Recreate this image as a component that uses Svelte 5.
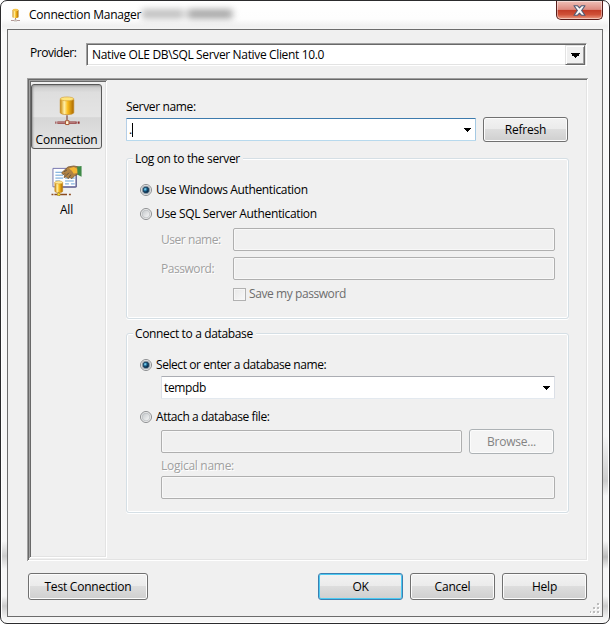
<script lang="ts">
  let provider = $state('Native OLE DB\\SQL Server Native Client 10.0');
  let server = $state('.');
  let auth = $state<'windows' | 'sql'>('windows');
  let source = $state<'name' | 'file'>('name');
  let database = $state('tempdb');
  let page = $state('connection');
</script>

{#snippet radio(checked: boolean, label: string, pick: () => void)}
  <button type="button" class="option" role="radio" aria-checked={checked} onclick={pick}>
    <svg width="12" height="12" viewBox="0 0 12 12">
      <circle cx="6" cy="6" r="5.5" fill="#f6f6f6" stroke="#8b8d8f" stroke-width="1" />
      <circle cx="6" cy="6" r="3.9" fill="url(#well)" stroke={checked ? '#7f8b94' : '#b9bcbf'} stroke-width=".8" />
      {#if checked}
        <circle cx="6" cy="6" r="2.900" fill="url(#ball)" stroke="#143a59" stroke-width=".8" />
      {/if}
    </svg>
    <span>{label}</span>
  </button>
{/snippet}

{#snippet arrow()}
  <svg class="arrow" width="7" height="4" viewBox="0 0 7 4" shape-rendering="crispEdges">
    <path d="M0 0h7v1H6v1H5v1H4v1H3V3H2V2H1V1H0z" />
  </svg>
{/snippet}

<svg class="defs" width="0" height="0" aria-hidden="true">
  <defs>
    <linearGradient id="gold">
      <stop offset="0" stop-color="#c98506" />
      <stop offset=".3" stop-color="#fff0a8" />
      <stop offset=".55" stop-color="#fbbd1d" />
      <stop offset="1" stop-color="#a96700" />
    </linearGradient>
    <linearGradient id="well" x2="1" y2="1">
      <stop offset="0" stop-color="#c3c7ca" />
      <stop offset="1" stop-color="#fafafa" />
    </linearGradient>
    <radialGradient id="ball" cx=".35" cy=".35">
      <stop offset="0" stop-color="#b8ecfb" />
      <stop offset=".4" stop-color="#3190bd" />
      <stop offset="1" stop-color="#0c3150" />
    </radialGradient>
  </defs>
</svg>

<div class="window">
  <header class="titlebar">
    <svg class="app-icon" width="16" height="16" viewBox="0 0 16 16">
      <path d="M4.500 3v7c0 1.500 6 1.500 6 0V3z" fill="url(#gold)" />
      <ellipse cx="7.500" cy="3" rx="3" ry="1.200" fill="#f6c64e" />
      <path d="M7 11h1v2H7z" fill="#a88" />
      <path d="M3 13h9v1H3z" fill="#b39a98" />
      <path d="M6 12.500h3v2H6z" fill="#c9c0b8" />
    </svg>
    <h1>Connection Manager</h1>
    <span class="ghost" aria-hidden="true"></span>
    <button type="button" class="close" aria-label="Close">
      <svg width="13" height="11" viewBox="0 0 13 11">
        <path d="M1 .8h3.600l1.900 2 1.900-2H12L8.600 5.500l3.400 4.700H8.400l-1.900-2.100-1.900 2.100H1l3.400-4.700z" fill="#f7f7f7" stroke="#4e5872" stroke-width="1.100" stroke-linejoin="round" />
      </svg>
    </button>
  </header>

  <main class="client">
    <div class="provider">
      <span class="provider-label">Provider:</span>
      <div class="classic">
        <span class="value">{provider}</span>
        <button type="button" class="drop" aria-label="Open">{@render arrow()}</button>
      </div>
    </div>

    <div class="panel">
      <nav class="sidebar">
        <button type="button" class="tab" class:active={page === 'connection'} onclick={() => (page = 'connection')}>
          <svg width="32" height="32" viewBox="0 0 32 32">
            <path d="M9 4.500v13.500c0 3 14 3 14 0v-13.500z" fill="url(#gold)" stroke="#c58a20" stroke-width=".7" />
            <ellipse cx="16" cy="4" rx="7" ry="2" fill="#ffe57c" stroke="#d6a238" stroke-width=".7" />
            <path d="M16 21v5" stroke="#a38278" stroke-width="2" />
            <path d="M4 28.500h1m1 0h20m1 0h2" stroke="#8c2d2d" stroke-width="2.400" />
            <path d="M6 28.500h19" stroke="#c99b9b" stroke-width=".8" />
            <path d="M14.500 26.500h3.500v4h-3.500z" fill="#fff8d8" stroke="#a5522f" />
          </svg>
          <span>Connection</span>
        </button>
        <button type="button" class="tab" class:active={page === 'all'} onclick={() => (page = 'all')}>
          <svg width="32" height="32" viewBox="0 0 32 32">
            <path d="M1.500 3.500h24v19h-24z" fill="#fff" stroke="#7474ad" />
            <path d="M25.500 8v15M5 22.800h20" stroke="#656593" stroke-width="1.300" />
            <path d="M4 7.500h8M4 10.500h8M4 13.500h8M4 16.500h5M14 13.500h4m2 0h4M14 16.500h9M14 19.500h4m2 0h4" stroke="#639fd5" />
            <path d="M10.500 8 17 2l6-1 5 1v7l-4 2-3 3-2-1-2 1-2-2-2 1 1-4-2 1z" fill="#b08243" stroke="#75512c" stroke-width=".8" />
            <path d="M18 3.500 23 2l4 2v4l-4 1-2-3z" fill="#f5b532" />
            <path d="m13 7 3-2m-1 6 3-3m0 5 2-3" stroke="#5c5348" />
            <path d="M26.500 1.500 31 1v11l-4-2z" fill="#3f8a47" />
            <path d="M3.500 18v9c0 2 8 2 8 0v-9z" fill="url(#gold)" stroke="#c58a20" stroke-width=".7" />
            <ellipse cx="7.500" cy="18" rx="4" ry="1.500" fill="#ffe998" stroke="#d6a238" stroke-width=".6" />
            <path d="M0 30.500h2m1 0h13m2 0h2" stroke="#8b4a20" stroke-width="1.500" />
            <path d="M7.500 28.300 9.500 30.500l-2 1.500-2-1.500z" fill="#f7db2b" stroke="#8c6c12" stroke-width=".7" />
          </svg>
          <span>All</span>
        </button>
      </nav>

      <section class="form">
        <span class="text">Server name:</span>
        <div class="server-row">
          <div class="combo focused">
            <span class="value">{server}<i class="caret"></i></span>
            {@render arrow()}
          </div>
          <button type="button" class="btn">Refresh</button>
        </div>

        <fieldset class="logon">
          <legend>Log on to the server</legend>
          {@render radio(auth === 'windows', 'Use Windows Authentication', () => (auth = 'windows'))}
          {@render radio(auth === 'sql', 'Use SQL Server Authentication', () => (auth = 'sql'))}
          <div class="credentials">
            <span class="off">User name:</span>
            <div class="field"></div>
            <span class="off">Password:</span>
            <div class="field"></div>
            <span class="check"><i class="box"></i>Save my password</span>
          </div>
        </fieldset>

        <fieldset class="database">
          <legend>Connect to a database</legend>
          {@render radio(source === 'name', 'Select or enter a database name:', () => (source = 'name'))}
          <div class="combo">
            <span class="value">{database}</span>
            {@render arrow()}
          </div>
          {@render radio(source === 'file', 'Attach a database file:', () => (source = 'file'))}
          <div class="file-row">
            <div class="field"></div>
            <button type="button" class="btn" disabled>Browse...</button>
          </div>
          <span class="off logical">Logical name:</span>
          <div class="field"></div>
        </fieldset>
      </section>
    </div>

    <footer>
      <button type="button" class="btn test">Test Connection</button>
      <button type="button" class="btn default">OK</button>
      <button type="button" class="btn">Cancel</button>
      <button type="button" class="btn">Help</button>
    </footer>
    <svg class="grip" width="11" height="11" viewBox="0 0 11 11" shape-rendering="crispEdges">
      <path d="M8 1h2v2H8zM4 5h2v2H4zM8 5h2v2H8zM0 9h2v2H0zM4 9h2v2H4zM8 9h2v2H8z" fill="#fff" />
      <path d="M7 0h2v2H7zM3 4h2v2H3zM7 4h2v2H7zM0 8h1v2H0zM3 8h2v2H3zM7 8h2v2H7z" fill="#bcbcbc" />
    </svg>
  </main>
</div>

<style>
  :global(body) {
    margin: 0;
    background: #fff;
  }
  .defs {
    position: absolute;
  }
  .window,
  .window * {
    box-sizing: border-box;
  }
  .window {
    width: 610px;
    height: 624px;
    padding: 0 6px;
    border: 1px solid #2b2b2d;
    border-radius: 7px;
    background:
      linear-gradient(#0000 0 540px, #ccc 555px, #0000 568px 595px, #ccc 605px, #0000 618px) 0 0 / 6px 100% no-repeat,
      linear-gradient(#0000 0 435px, #ccc 480px, #0000 495px 540px, #bbb 556px, #0000 568px 595px, #ccc 605px, #0000 618px) 100% 0 / 6px 100% no-repeat,
      linear-gradient(#fff, #fdfdfd 18px, #f0f0f0 25px, #f9f9f9 32px, #f6f6f6);
    box-shadow: inset 0 0 0 1px #fff;
    font: 12px/16px 'Open Sans', 'Noto Sans', sans-serif;
    letter-spacing: -0.35px;
    color: #000;
  }
  button {
    padding: 0;
    border: 0;
    background: none;
    font: inherit;
    letter-spacing: inherit;
    color: inherit;
    white-space: nowrap;
  }
  .titlebar {
    display: flex;
    align-items: flex-start;
    height: 28px;
    padding-left: 1px;
  }
  .app-icon {
    margin-top: 6px;
  }
  h1 {
    margin: 6px 0 0 5px;
    width: 113px;
    font-size: 12px;
    font-weight: 400;
    letter-spacing: -0.25px;
    white-space: nowrap;
  }
  .ghost {
    width: 92px;
    height: 10px;
    margin-top: 8px;
    background: linear-gradient(90deg, #aaa 0 42%, #e8e8e8 47%, #888 53% 95%, #ddd);
    filter: blur(3px);
    opacity: 0.7;
  }
  .close {
    display: flex;
    align-items: center;
    justify-content: center;
    width: 47px;
    height: 19px;
    margin-left: auto;
    border: 1px solid #571d1a;
    border-top: 0;
    border-radius: 0 0 5px 5px;
    background: linear-gradient(#efc0b7, #dd8b80 47%, #c23b26 50%, #cf5138 75%, #ec9b83);
    box-shadow: inset 0 0 0 1px #ffffff70;
  }
  .client {
    position: relative;
    height: 588px;
    padding: 13px 15px 0 19px;
    border: 1px solid #6c6c6c;
    background: #f0f0f0;
  }
  .provider {
    display: flex;
    padding-left: 3px;
  }
  .provider-label {
    width: 56px;
    padding-top: 2px;
    letter-spacing: -0.45px;
  }
  .classic {
    display: flex;
    flex: 1;
    height: 23px;
    border: 1px solid;
    border-color: #a0a0a0 #fff #fff #a0a0a0;
    background: #fff;
    box-shadow: inset 1px 1px #696969, inset -1px -1px #e3e3e3;
  }
  .classic .value {
    flex: 1;
    padding: 3px 0 0 5px;
  }
  .drop {
    display: flex;
    align-items: center;
    justify-content: center;
    width: 20px;
    height: 20px;
    margin: 1px 1px 0 0;
    border: 1px solid;
    border-color: #e3e3e3 #696969 #696969 #e3e3e3;
    background: #f0f0f0;
    box-shadow: inset 1px 1px #fff, inset -1px -1px #a0a0a0;
  }
  .drop .arrow {
    width: 9px;
    height: 5px;
  }
  .panel {
    display: flex;
    width: 561px;
    height: 483px;
    margin-top: 12px;
    padding: 2px;
    border: 0;
    box-shadow:
      inset 1px 1px #a0a0a0,
      inset -1px -1px #fff,
      inset 2px 2px #696969,
      inset -2px -2px #e3e3e3;
  }
  .sidebar {
    width: 78px;
    height: 478px;
    padding: 4px 2px 0;
    box-shadow:
      inset 1px 1px #a0a0a0,
      inset -1px -1px #fff,
      inset 2px 2px #696969,
      inset -2px -2px #e3e3e3;
  }
  .tab {
    display: flex;
    flex-direction: column;
    align-items: center;
    width: 71px;
    height: 65px;
    margin-bottom: 5px;
    padding-top: 10px;
    border: 1px solid transparent;
    border-radius: 3px;
    letter-spacing: -0.2px;
  }
  .tab span {
    margin-top: 6px;
  }
  .tab.active {
    border-color: #585858;
    background: linear-gradient(#c6c6c6, #dedede 12%, #e4e4e4 50%, #d6d6d6 52%, #e6e6e6);
    box-shadow: inset 1px 1px 2px #999;
  }
  .form {
    flex: 1;
    padding: 19px 17px 0 19px;
  }
  .text {
    display: block;
  }
  .server-row {
    display: flex;
    align-items: center;
    gap: 7px;
    width: 442px;
    margin-top: 2px;
  }
  .combo {
    display: flex;
    align-items: center;
    height: 23px;
    padding: 0 4px 0 2px;
    border: 1px solid;
    border-color: #abadb3 #dbdfe6 #e3e9ef #dbdfe6;
    border-radius: 1px;
    background: #fff;
  }
  .combo .value {
    flex: 1;
  }
  .combo.focused {
    flex: 1;
    border-color: #3d7bad #a4c9e3 #b7d9ed #b5cfe7;
  }
  .caret {
    display: inline-block;
    width: 1px;
    height: 14px;
    background: #000;
    vertical-align: -3px;
  }
  .btn {
    width: 85px;
    height: 25px;
    border: 1px solid #707070;
    border-radius: 3px;
    background: linear-gradient(#f2f2f2, #ebebeb 48%, #dddddd 50%, #cfcfcf);
    box-shadow: inset 0 0 0 1px #fcfcfc;
    letter-spacing: -0.22px;
  }
  .btn:disabled {
    border-color: #adb2b5;
    background: #f4f4f4;
    color: #838383;
  }
  .btn.default {
    margin-left: auto;
    border-color: #3c7fb1;
    box-shadow: inset 0 0 0 1px #4ccaf2;
  }
  fieldset {
    width: 443px;
    margin: 0;
    padding: 0 13px;
    border: 1px solid #d5dfe5;
    border-radius: 3px;
    box-shadow: inset 0 0 0 1px #fff, 0 1px #fff;
  }
  legend {
    height: 17px;
    margin-left: -7px;
    padding: 1px 3px 0 2px;
    background: #f0f0f0;
  }
  .logon {
    height: 169px;
    margin-top: 8px;
  }
  .database {
    height: 188px;
    margin-top: 6px;
  }
  .option {
    display: flex;
    align-items: center;
    gap: 4px;
    height: 16px;
  }
  legend + .option {
    margin-top: 15px;
  }
  .logon .option + .option {
    margin-top: 8px;
  }
  .database .option {
    letter-spacing: -0.43px;
  }
  .credentials {
    display: grid;
    grid-template-columns: 72px 322px;
    row-gap: 6px;
    align-items: center;
    margin: 6px 0 0 21px;
  }
  .off {
    color: #a0a0a0;
    letter-spacing: -0.45px;
    text-shadow: 1px 1px #fff;
  }
  .field {
    height: 23px;
    border: 1px solid #afafaf;
    border-radius: 2px;
    box-shadow: inset 0 0 0 1px #f8f8f8;
  }
  .check {
    grid-column: 2;
    display: flex;
    align-items: center;
    gap: 3px;
    color: #6d6d6d;
    letter-spacing: -0.42px;
  }
  .box {
    width: 13px;
    height: 13px;
    border: 1px solid #b1b1b1;
    background: linear-gradient(135deg, #e8e8e8, #f8f8f8);
    box-shadow: inset 0 0 0 1px #f6f6f6;
  }
  .database .combo {
    width: 394px;
    margin: 3px 0 10px 21px;
  }
  .file-row {
    display: flex;
    align-items: center;
    gap: 7px;
    width: 393px;
    margin: 4px 0 4px 21px;
  }
  .file-row .field {
    flex: 1;
  }
  .logical {
    display: block;
    margin-left: 21px;
    letter-spacing: -0.28px;
  }
  .logical + .field {
    width: 394px;
    margin: 2px 0 0 21px;
  }
  footer {
    display: flex;
    gap: 7px;
    margin-top: 12px;
    padding-left: 1px;
  }
  footer .btn {
    height: 27px;
  }
  .test {
    width: 120px;
  }
  .grip {
    position: absolute;
    right: 1px;
    bottom: 2px;
  }
</style>
